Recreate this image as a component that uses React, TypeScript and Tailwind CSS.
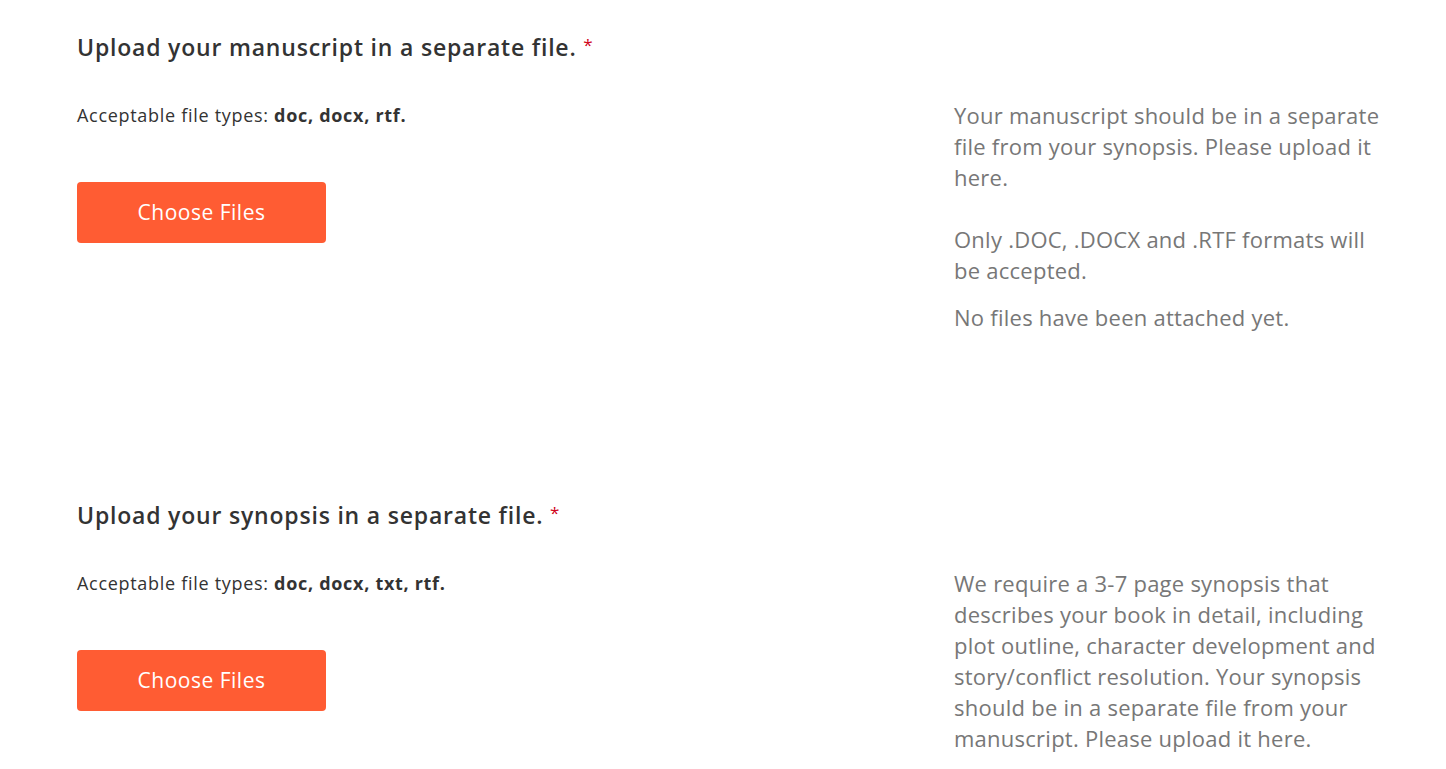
import React from "react";

const font = { fontFamily: "'Open Sans', Lato, sans-serif" };

interface SectionProps {
  title: string;
  types: string;
  children: React.ReactNode;
}

function UploadSection({ title, types, children }: SectionProps) {
  return (
    <section className="flex">
      <div className="w-[877px] shrink-0">
        <h2 className="text-[23px] leading-[30px] font-semibold tracking-[0.8px] text-[#333333]">
          {title}{" "}
          <span className="relative -top-[5px] text-[17px] font-normal text-[#d0021b]">*</span>
        </h2>
        <p className="mt-[38px] text-[18px] leading-[24px] tracking-[0.7px] text-[#333333]">
          Acceptable file types: <b className="font-bold">{types}</b>
        </p>
        <button className="mt-[55px] w-[249px] h-[61px] rounded bg-[#ff5c33] text-white text-[21px] tracking-[0.5px]">
          Choose Files
        </button>
      </div>
      <div className="w-[440px] pt-[68px] text-[22px] leading-[31px] tracking-[0.25px] text-[#777777]">
        {children}
      </div>
    </section>
  );
}

export default function App() {
  return (
    <div className="min-h-screen bg-white pl-[77px] pt-[32px]" style={font}>
      <UploadSection title="Upload your manuscript in a separate file." types="doc, docx, rtf.">
        <p>Your manuscript should be in a separate file from your synopsis. Please upload it here.</p>
        <p className="mt-[31px]">Only .DOC, .DOCX and .RTF formats will be accepted.</p>
        <p className="mt-[16px]">No files have been attached yet.</p>
      </UploadSection>
      <div className="h-[167px]" />
      <UploadSection title="Upload your synopsis in a separate file." types="doc, docx, txt, rtf.">
        <p>
          We require a 3-7 page synopsis that describes your book in detail, including plot outline, character
          development and story/conflict resolution. Your synopsis should be in a separate file from your
          manuscript. Please upload it here.
        </p>
      </UploadSection>
    </div>
  );
}
